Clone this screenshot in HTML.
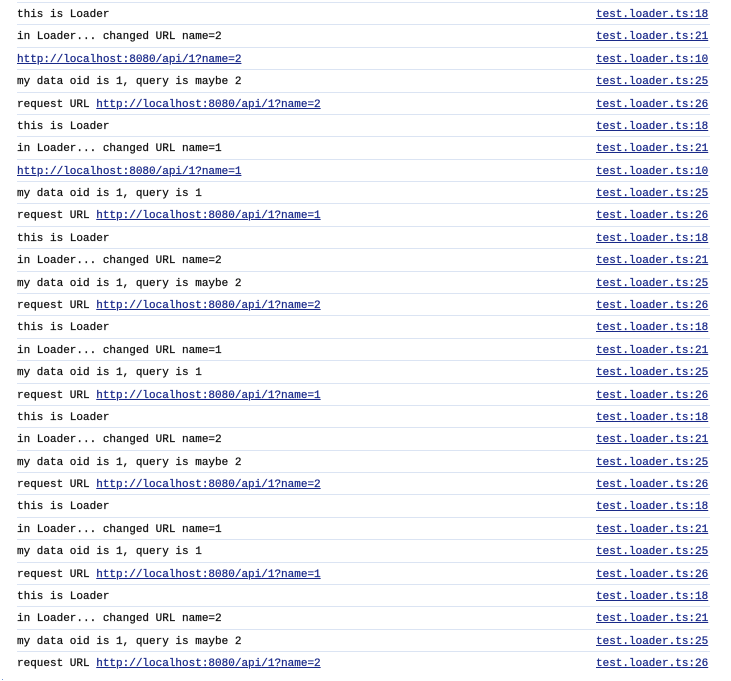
<!DOCTYPE html>
<html><head><meta charset="utf-8"><style>
html,body{margin:0;padding:0;background:#fff;width:731px;height:681px;overflow:hidden}
.r{position:absolute;left:17px;width:693px;height:22.38px;border-top:1px solid #dbe4f3;box-sizing:border-box;font:11px "Liberation Mono",monospace;color:#111;line-height:24px;white-space:pre;-webkit-text-stroke:0.25px #111}
.r a{text-decoration:underline;color:#1a2a8a;-webkit-text-stroke:0.25px #1a2a8a}
.s{position:absolute;left:579px;top:0}
</style></head><body>
<div class="r" style="top:2px">this is Loader<a class="s">test.loader.ts:18</a></div>
<div class="r" style="top:24.4px">in Loader... changed URL name=2<a class="s">test.loader.ts:21</a></div>
<div class="r" style="top:46.8px"><a>http://localhost:8080/api/1?name=2</a><a class="s">test.loader.ts:10</a></div>
<div class="r" style="top:69.1px">my data oid is 1, query is maybe 2<a class="s">test.loader.ts:25</a></div>
<div class="r" style="top:91.5px">request URL <a>http://localhost:8080/api/1?name=2</a><a class="s">test.loader.ts:26</a></div>
<div class="r" style="top:113.9px">this is Loader<a class="s">test.loader.ts:18</a></div>
<div class="r" style="top:136.3px">in Loader... changed URL name=1<a class="s">test.loader.ts:21</a></div>
<div class="r" style="top:158.7px"><a>http://localhost:8080/api/1?name=1</a><a class="s">test.loader.ts:10</a></div>
<div class="r" style="top:181px">my data oid is 1, query is 1<a class="s">test.loader.ts:25</a></div>
<div class="r" style="top:203.4px">request URL <a>http://localhost:8080/api/1?name=1</a><a class="s">test.loader.ts:26</a></div>
<div class="r" style="top:225.8px">this is Loader<a class="s">test.loader.ts:18</a></div>
<div class="r" style="top:248.2px">in Loader... changed URL name=2<a class="s">test.loader.ts:21</a></div>
<div class="r" style="top:270.6px">my data oid is 1, query is maybe 2<a class="s">test.loader.ts:25</a></div>
<div class="r" style="top:292.9px">request URL <a>http://localhost:8080/api/1?name=2</a><a class="s">test.loader.ts:26</a></div>
<div class="r" style="top:315.3px">this is Loader<a class="s">test.loader.ts:18</a></div>
<div class="r" style="top:337.7px">in Loader... changed URL name=1<a class="s">test.loader.ts:21</a></div>
<div class="r" style="top:360.1px">my data oid is 1, query is 1<a class="s">test.loader.ts:25</a></div>
<div class="r" style="top:382.5px">request URL <a>http://localhost:8080/api/1?name=1</a><a class="s">test.loader.ts:26</a></div>
<div class="r" style="top:404.8px">this is Loader<a class="s">test.loader.ts:18</a></div>
<div class="r" style="top:427.2px">in Loader... changed URL name=2<a class="s">test.loader.ts:21</a></div>
<div class="r" style="top:449.6px">my data oid is 1, query is maybe 2<a class="s">test.loader.ts:25</a></div>
<div class="r" style="top:472px">request URL <a>http://localhost:8080/api/1?name=2</a><a class="s">test.loader.ts:26</a></div>
<div class="r" style="top:494.4px">this is Loader<a class="s">test.loader.ts:18</a></div>
<div class="r" style="top:516.7px">in Loader... changed URL name=1<a class="s">test.loader.ts:21</a></div>
<div class="r" style="top:539.1px">my data oid is 1, query is 1<a class="s">test.loader.ts:25</a></div>
<div class="r" style="top:561.5px">request URL <a>http://localhost:8080/api/1?name=1</a><a class="s">test.loader.ts:26</a></div>
<div class="r" style="top:583.9px">this is Loader<a class="s">test.loader.ts:18</a></div>
<div class="r" style="top:606.3px">in Loader... changed URL name=2<a class="s">test.loader.ts:21</a></div>
<div class="r" style="top:628.6px">my data oid is 1, query is maybe 2<a class="s">test.loader.ts:25</a></div>
<div class="r" style="top:651px">request URL <a>http://localhost:8080/api/1?name=2</a><a class="s">test.loader.ts:26</a></div>
<div style="position:absolute;left:2px;top:679px;width:1px;height:1px;background:#6a8fd0"></div>
</body></html>
